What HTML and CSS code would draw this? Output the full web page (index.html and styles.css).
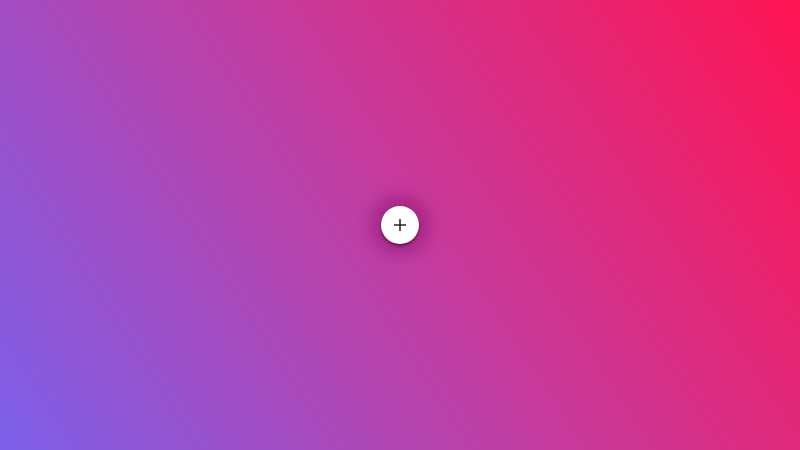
FILE: index.html
```html
<!DOCTYPE html>
<html>
<head>
<meta charset="utf-8">
<link rel="stylesheet" href="styles.css">
</head>
<body>
<main class="stage">
  <button class="fab" aria-label="Add">
    <svg width="14" height="14" viewBox="0 0 14 14"><path d="M7 1v12M1 7h12" stroke="#2a2a2a" stroke-width="1.6" fill="none"/></svg>
  </button>
</main>
</body>
</html>
```
FILE: styles.css
```css
html, body { margin: 0; padding: 0; height: 100%; }
body { font-family: "Liberation Sans", sans-serif; }
.stage {
  width: 800px; height: 450px;
  background: linear-gradient(57deg, #7c60ea 0%, #c43c9f 50%, #ff1452 100%);
  display: flex; align-items: center; justify-content: center;
}
.fab {
  width: 38px; height: 38px; border-radius: 50%;
  border: none; background: #fff; padding: 0;
  display: flex; align-items: center; justify-content: center;
  box-shadow: 0 2px 3px rgba(0,0,0,0.45), 0 0 14px 12px rgba(120,10,100,0.35);
}
```
